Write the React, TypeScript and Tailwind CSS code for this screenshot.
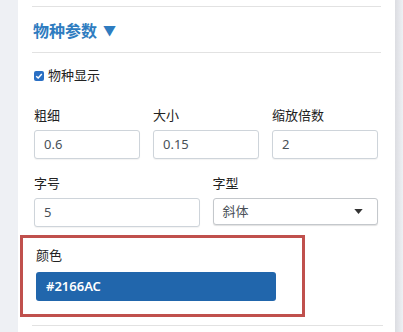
const font = { fontFamily: '"Noto Sans", "Noto Sans CJK SC", sans-serif' }

const Field = ({ label, value }: { label: string; value: string }) => (
  <div className="flex flex-col">
    <label className="text-[13px] leading-[18px] text-[#222] h-[18px]">{label}</label>
    <div className="mt-[6px] h-[29px] rounded-[3px] border border-[#ced4da] bg-white px-[9px] flex items-center text-[13px] text-[#495057] shadow-[0_1px_1px_rgba(0,0,0,0.05)]">
      {value}
    </div>
  </div>
)

export default function App() {
  return (
    <div className="flex h-[332px] w-[403px] overflow-hidden bg-[#eef0f4]" style={font}>
      {/* left gutter */}
      <div className="w-[18px] shrink-0" />

      {/* panel */}
      <div className="w-[377px] shrink-0 bg-white flex flex-col">
        <div className="h-[6px]" />
        <div className="mx-[14px] border-t border-[#e2e2e2]" />

        {/* section header */}
        <div className="h-[45px] px-[15px] flex items-center pt-[2px]">
          <span className="text-[16px] font-semibold text-[#2e7cc0]">物种参数</span>
          <span className="ml-[6px] text-[13px] text-[#2e7cc0]">▼</span>
        </div>
        <div className="mx-[14px] border-t border-[#e2e2e2]" />

        {/* checkbox */}
        <div className="h-[44px] px-[16px] flex items-center pt-[1px]">
          <span className="w-[10px] h-[10px] rounded-[2px] bg-[#2a6fc4] flex items-center justify-center">
            <svg viewBox="0 0 10 10" className="w-[8px] h-[8px]">
              <path d="M1.5 5.2 L4 7.5 L8.5 2.5" stroke="white" strokeWidth="1.8" fill="none" />
            </svg>
          </span>
          <span className="ml-[4px] text-[13px] text-[#222]">物种显示</span>
        </div>

        {/* row 1 */}
        <div className="mt-[9px] pl-[16px] pr-[17px] grid grid-cols-3 gap-x-[13px]">
          <Field label="粗细" value="0.6" />
          <Field label="大小" value="0.15" />
          <Field label="缩放倍数" value="2" />
        </div>

        {/* row 2 */}
        <div className="mt-[15px] pl-[16px] pr-[17px] grid grid-cols-2 gap-x-[13px]">
          <Field label="字号" value="5" />
          <div className="flex flex-col">
            <label className="text-[13px] leading-[18px] text-[#222] h-[18px]">字型</label>
            <div className="mt-[6px] h-[27px] rounded-[3px] border border-[#c4c8cc] bg-white pl-[9px] pr-[14px] flex items-center justify-between text-[13px] text-[#495057] shadow-[0_1px_1px_rgba(0,0,0,0.12)]">
              <span>斜体</span>
              <svg viewBox="0 0 10 6" className="w-[9px] h-[5px]">
                <path d="M0 0 L10 0 L5 6 Z" fill="#333" />
              </svg>
            </div>
          </div>
        </div>

        {/* highlighted colour field */}
        <div className="mt-[8px] ml-[2px] w-[285px] h-[82px] border-[3px] border-[#c0504d] pl-[13px] pt-[8px]">
          <label className="block text-[13px] leading-[18px] text-[#222]">颜色</label>
          <div className="mt-[8px] w-[240px] h-[29px] rounded-[3px] bg-[#2166AC] px-[10px] flex items-center text-[13px] font-semibold text-white">
            #2166AC
          </div>
        </div>

        <div className="mt-[8px] ml-[14px] mr-[12px] border-t border-[#e2e2e2]" />
      </div>

      {/* right shadow strip */}
      <div className="w-[8px] shrink-0 bg-gradient-to-r from-[#dcdde2] to-[#eef0f4]" />
    </div>
  )
}
